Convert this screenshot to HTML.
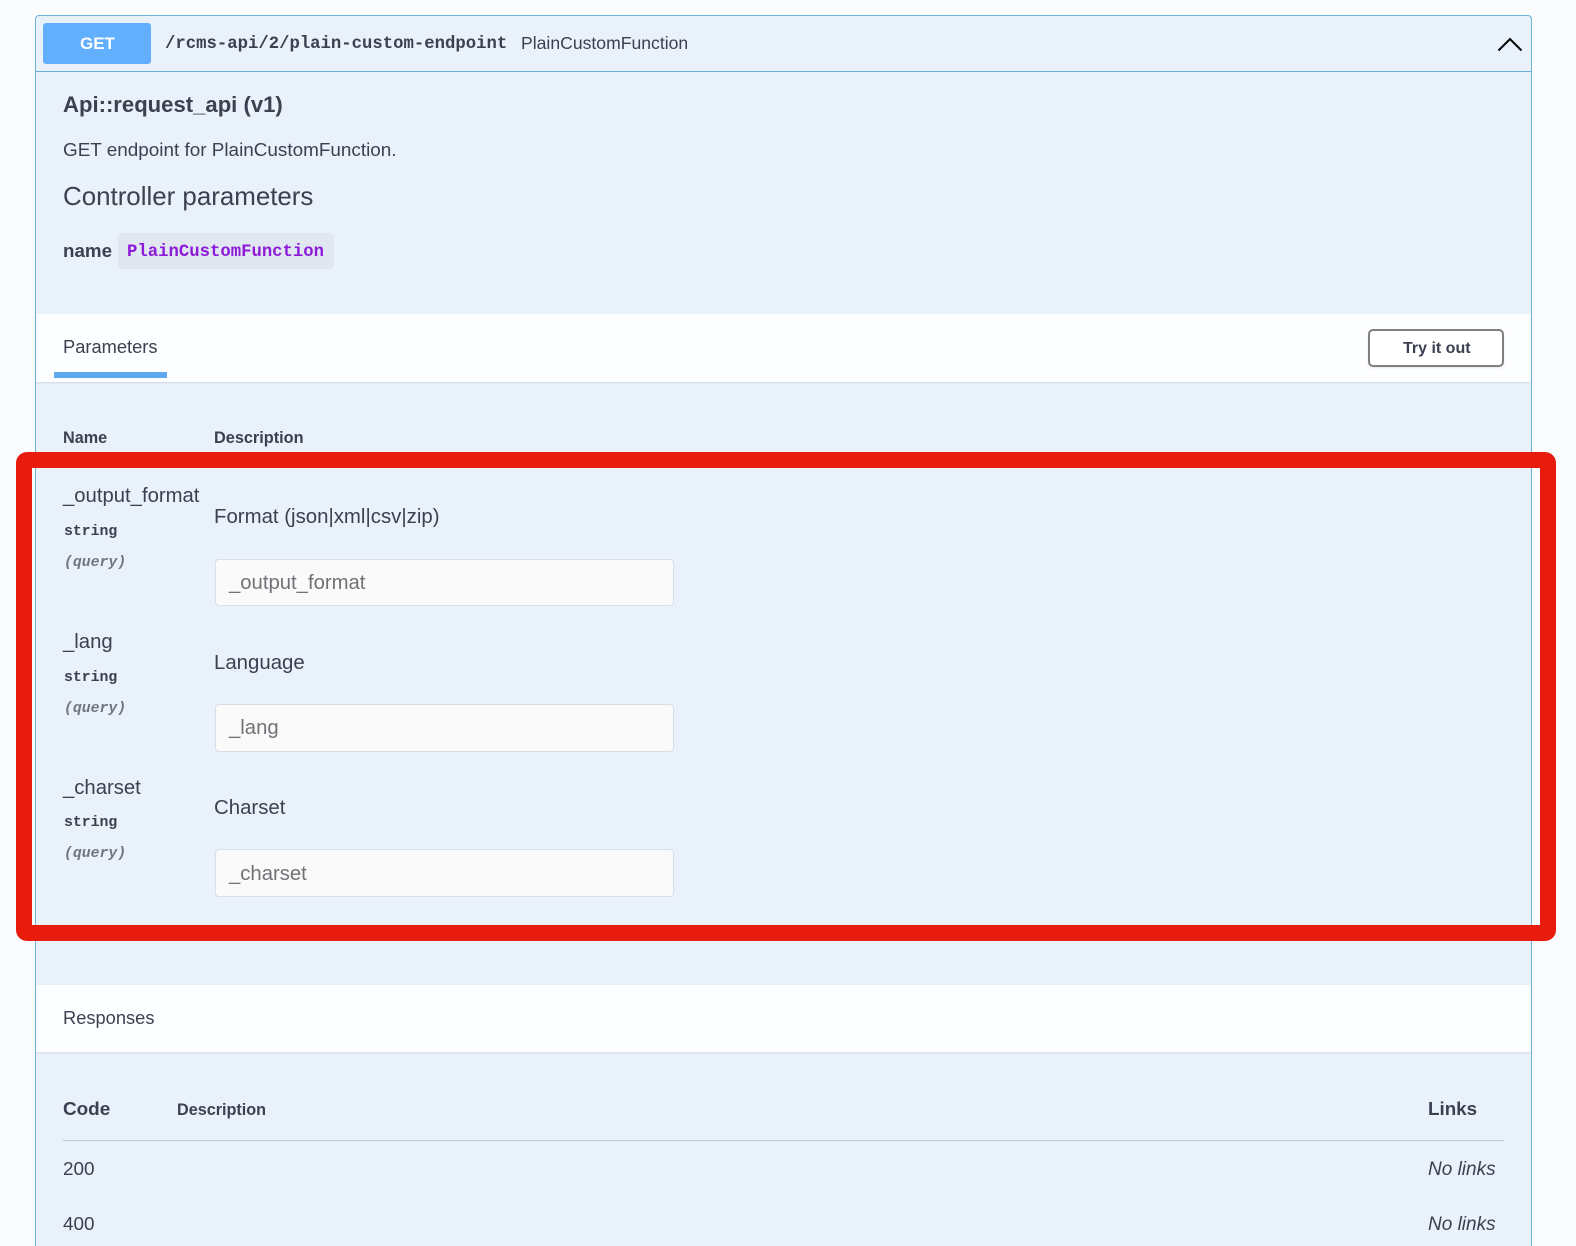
<!DOCTYPE html>
<html lang="en">
<head>
<meta charset="utf-8">
<title>API</title>
<style>
html,body{margin:0;padding:0;width:1576px;height:1246px;overflow:hidden;background:#fbfcfe;}
body{position:relative;font-family:"Liberation Sans",Arial,sans-serif;color:#3b4151;}
.b{position:absolute;box-sizing:border-box;}
.t{position:absolute;white-space:nowrap;line-height:30px;height:30px;}
.m{font-family:"Liberation Mono",monospace;font-weight:700;}
.inp{position:absolute;box-sizing:border-box;left:215px;width:459px;background:#fafafa;border:1px solid #d9dfe6;border-radius:4px;}
.ph{color:#6f7276;font-size:20.3px;}
.ty{font-size:14.8px;}
.q{font-size:14.8px;font-style:italic;color:#71757f;}
.n{font-size:20.3px;}
.d{font-size:20.4px;}
</style>
</head>
<body>
<!-- card -->
<div class="b" style="left:35px;top:15px;width:1497px;height:1260px;background:#e9f1fb;border:1px solid #6fb2d8;border-radius:4px;"></div>
<div class="b" style="left:36px;top:71px;width:1495px;height:1px;background:#6fb0d6;"></div>

<!-- header -->
<div class="b" style="left:43px;top:23px;width:108px;height:41px;background:#61affe;border-radius:3px;"></div>
<div class="t" style="left:80px;top:29px;font-size:17px;font-weight:700;color:#fff;">GET</div>
<div class="t m" style="left:165px;top:30px;font-size:17.3px;color:#3b4151;">/rcms-api/2/plain-custom-endpoint</div>
<div class="t" style="left:521px;top:28px;font-size:17.6px;">PlainCustomFunction</div>
<svg class="b" style="left:1496px;top:35px;" width="28" height="18" viewBox="0 0 28 18"><path d="M2.500 15.500 L14 4 L25.500 15.500" fill="none" stroke="#000" stroke-width="2"/></svg>

<!-- description -->
<div class="t" style="left:63px;top:90px;font-size:22.1px;font-weight:700;">Api::request_api (v1)</div>
<div class="t" style="left:63px;top:136px;font-size:18.9px;">GET endpoint for PlainCustomFunction.</div>
<div class="t" style="left:63px;top:182px;font-size:25.9px;">Controller parameters</div>
<div class="t" style="left:63px;top:236px;font-size:18.8px;font-weight:700;">name</div>
<div class="b" style="left:118px;top:233px;width:216px;height:36px;background:#e1e7f0;border-radius:4px;"></div>
<div class="t m" style="left:127px;top:238px;font-size:17.3px;color:#8c1ad8;">PlainCustomFunction</div>

<!-- parameters band -->
<div class="b" style="left:36px;top:314px;width:1495px;height:68px;background:#fdfeff;box-shadow:0 1px 2px rgba(0,0,0,.1);"></div>
<div class="t" style="left:63px;top:332px;font-size:18.3px;">Parameters</div>
<div class="b" style="left:54px;top:372px;width:113px;height:6px;background:#61a9ef;"></div>
<div class="b" style="left:1368px;top:329px;width:136px;height:38px;background:#fff;border:2px solid #808080;border-radius:5px;box-shadow:0 1px 2px rgba(0,0,0,.1);"></div>
<div class="t" style="left:1403px;top:334px;font-size:16px;font-weight:700;">Try it out</div>

<div class="t" style="left:63px;top:423px;font-size:16.2px;font-weight:700;">Name</div>
<div class="t" style="left:214px;top:423px;font-size:16.3px;font-weight:700;">Description</div>

<!-- row 1 -->
<div class="t n" style="left:63px;top:481px;">_output_format</div>
<div class="t m ty" style="left:64px;top:517px;">string</div>
<div class="t m q" style="left:64px;top:548px;">(query)</div>
<div class="t d" style="left:214px;top:502px;">Format (json|xml|csv|zip)</div>
<div class="inp" style="top:559px;height:47px;"></div>
<div class="t ph" style="left:229px;top:568px;">_output_format</div>

<!-- row 2 -->
<div class="t n" style="left:63px;top:627px;">_lang</div>
<div class="t m ty" style="left:64px;top:663px;">string</div>
<div class="t m q" style="left:64px;top:694px;">(query)</div>
<div class="t d" style="left:214px;top:648px;">Language</div>
<div class="inp" style="top:704px;height:48px;"></div>
<div class="t ph" style="left:229px;top:713px;">_lang</div>

<!-- row 3 -->
<div class="t n" style="left:63px;top:773px;">_charset</div>
<div class="t m ty" style="left:64px;top:808px;">string</div>
<div class="t m q" style="left:64px;top:839px;">(query)</div>
<div class="t d" style="left:214px;top:793px;">Charset</div>
<div class="inp" style="top:849px;height:48px;"></div>
<div class="t ph" style="left:229px;top:859px;">_charset</div>

<!-- responses band -->
<div class="b" style="left:36px;top:985px;width:1495px;height:67px;background:#fdfeff;box-shadow:0 1px 2px rgba(0,0,0,.1);"></div>
<div class="t" style="left:63px;top:1003px;font-size:18.3px;">Responses</div>

<div class="t" style="left:63px;top:1095px;font-size:18.9px;font-weight:700;">Code</div>
<div class="t" style="left:177px;top:1095px;font-size:16.2px;font-weight:700;">Description</div>
<div class="t" style="left:1428px;top:1094px;font-size:18.8px;font-weight:700;">Links</div>
<div class="b" style="left:63px;top:1140px;width:1441px;height:1px;background:#bcc8d8;"></div>

<div class="t" style="left:63px;top:1155px;font-size:18.9px;">200</div>
<div class="t" style="left:1428px;top:1155px;font-size:19px;font-style:italic;">No links</div>
<div class="t" style="left:63px;top:1210px;font-size:18.9px;">400</div>
<div class="t" style="left:1428px;top:1210px;font-size:19px;font-style:italic;">No links</div>

<!-- red highlight -->
<div class="b" style="left:16px;top:452px;width:1540px;height:489px;border:16px solid #e81c0c;border-radius:11px;"></div>
</body>
</html>
